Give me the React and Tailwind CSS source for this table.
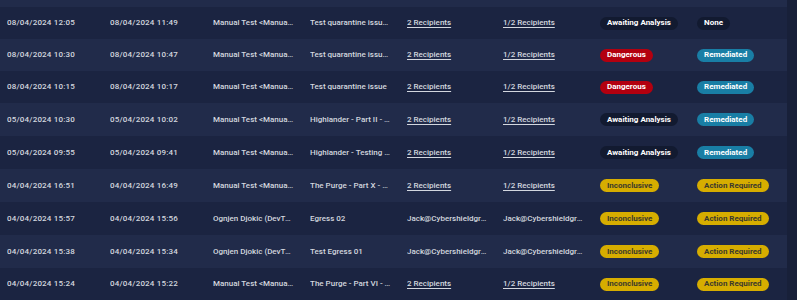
import React from 'react';

const rows = [
  ['08/04/2024 12:05', '08/04/2024 11:49', 'Manual Test <ManualTest@cybershield.com>', 'Test quarantine issue 1', '2 Recipients', '1/2 Recipients', 'awaiting', 'none'],
  ['08/04/2024 10:30', '08/04/2024 10:47', 'Manual Test <ManualTest@cybershield.com>', 'Test quarantine issue 2', '2 Recipients', '1/2 Recipients', 'dangerous', 'remediated'],
  ['08/04/2024 10:15', '08/04/2024 10:17', 'Manual Test <ManualTest@cybershield.com>', 'Test quarantine issue', '2 Recipients', '1/2 Recipients', 'dangerous', 'remediated'],
  ['05/04/2024 10:30', '05/04/2024 10:02', 'Manual Test <ManualTest@cybershield.com>', 'Highlander - Part II - The Return', '2 Recipients', '1/2 Recipients', 'awaiting', 'remediated'],
  ['05/04/2024 09:55', '05/04/2024 09:41', 'Manual Test <ManualTest@cybershield.com>', 'Highlander - Testing something', '2 Recipients', '1/2 Recipients', 'awaiting', 'remediated'],
  ['04/04/2024 16:51', '04/04/2024 16:49', 'Manual Test <ManualTest@cybershield.com>', 'The Purge - Part X - Final', '2 Recipients', '1/2 Recipients', 'inconclusive', 'action'],
  ['04/04/2024 15:57', '04/04/2024 15:56', 'Ognjen Djokic (DevTech)', 'Egress 02', 'Jack@Cybershieldgroup.com', 'Jack@Cybershieldgroup.com', 'inconclusive', 'action'],
  ['04/04/2024 15:38', '04/04/2024 15:34', 'Ognjen Djokic (DevTech)', 'Test Egress 01', 'Jack@Cybershieldgroup.com', 'Jack@Cybershieldgroup.com', 'inconclusive', 'action'],
  ['04/04/2024 15:24', '04/04/2024 15:22', 'Manual Test <ManualTest@cybershield.com>', 'The Purge - Part VI - The End', '2 Recipients', '1/2 Recipients', 'inconclusive', 'action'],
];

const heights = ['h-[32px]', 'h-[32px]', 'h-[32px]', 'h-[33px]', 'h-[33px]', 'h-[33px]', 'h-[33px]', 'h-[33px]', 'h-[32px]'];

const badges = {
  awaiting: { label: 'Awaiting Analysis', cls: 'bg-[#121a30] text-white' },
  none: { label: 'None', cls: 'bg-[#121a30] text-white' },
  dangerous: { label: 'Dangerous', cls: 'bg-[#b3000f] text-white' },
  remediated: { label: 'Remediated', cls: 'bg-[#197ea5] text-white' },
  inconclusive: { label: 'Inconclusive', cls: 'bg-[#d6ad00] text-[#3d3a2c]' },
  action: { label: 'Action Required', cls: 'bg-[#d6ad00] text-[#3d3a2c]' },
};

const Badge = ({ type }) => {
  const b = badges[type];
  return (
    <span className={`inline-flex items-center h-[13px] px-[7px] rounded-full text-[8px] font-bold leading-none ${b.cls}`}>
      {b.label}
    </span>
  );
};

const Cell = ({ w, children }) => (
  <div className={`${w} shrink-0 flex items-center overflow-hidden`}>{children}</div>
);

const Text = ({ value, link }) => (
  <span
    className={`block w-[82px] truncate ${link && value.includes('Recipients') ? 'underline underline-offset-[1.5px]' : ''}`}
  >
    {value}
  </span>
);

export default function App() {
  return (
    <div className="w-[797px] h-[300px] overflow-hidden bg-[#172038] flex font-['Roboto',sans-serif] font-medium text-[8px] text-[#d3d7df]">
      <div className="w-[787px] flex flex-col">
        <div className="h-[7px] shrink-0 bg-[#212b4a]" />
        {rows.map((r, i) => (
          <div
            key={i}
            className={`${heights[i]} shrink-0 flex items-center pl-[7px] ${i % 2 === 0 ? 'bg-[#1b2441]' : 'bg-[#212b4a]'}`}
          >
            <Cell w="w-[103px]"><span className="tracking-[0.2px]">{r[0]}</span></Cell>
            <Cell w="w-[103px]"><span className="tracking-[0.2px]">{r[1]}</span></Cell>
            <Cell w="w-[97px]"><Text value={r[2]} /></Cell>
            <Cell w="w-[97px]"><Text value={r[3]} /></Cell>
            <Cell w="w-[96px]"><Text value={r[4]} link /></Cell>
            <Cell w="w-[97px]"><Text value={r[5]} link /></Cell>
            <Cell w="w-[97px]"><Badge type={r[6]} /></Cell>
            <Cell w="w-[90px]"><Badge type={r[7]} /></Cell>
          </div>
        ))}
      </div>
      <div className="flex-1 bg-[#182039]" />
    </div>
  );
}
